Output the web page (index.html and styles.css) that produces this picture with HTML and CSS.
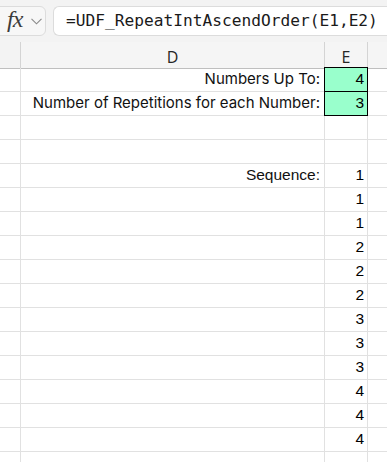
FILE: index.html
```html
<!DOCTYPE html>
<html lang="en">
<head>
    <meta charset="UTF-8">
    <title>UDF Repeat Int Ascend Order</title>
<link rel="stylesheet" href="styles.css">
</head>
<body>
<div class="formulaBar">
    <div class="fxBox">
        <span class="fx">fx</span>
        <svg class="chevron" width="11" height="7" viewBox="0 0 11 7"><path d="M0.5 0.8 L5.5 5.8 L10.5 0.8" fill="none" stroke="#8a8a8a" stroke-width="1.1"/></svg>
    </div>
    <div class="formulaBox">=UDF_RepeatIntAscendOrder(E1,E2)</div>
</div>
<div class="sheet">
    <div class="row header">
        <div class="cell"></div>
        <div class="cell colHead">D</div>
        <div class="cell colHead">E</div>
        <div class="cell last"></div>
    </div>
    <div class="row">
        <div class="cell"></div>
        <div class="cell label">Numbers Up To:</div>
        <div class="cell num input first">4</div>
        <div class="cell last"></div>
    </div>
    <div class="row">
        <div class="cell"></div>
        <div class="cell label">Number of Repetitions for each Number:</div>
        <div class="cell num input">3</div>
        <div class="cell last"></div>
    </div>
    <div class="row"><div class="cell"></div><div class="cell"></div><div class="cell"></div><div class="cell last"></div></div>
    <div class="row"><div class="cell"></div><div class="cell"></div><div class="cell"></div><div class="cell last"></div></div>
    <div class="row">
        <div class="cell"></div>
        <div class="cell seq">Sequence:</div>
        <div class="cell num">1</div>
        <div class="cell last"></div>
    </div>
    <div class="row"><div class="cell"></div><div class="cell"></div><div class="cell num">1</div><div class="cell last"></div></div>
    <div class="row"><div class="cell"></div><div class="cell"></div><div class="cell num">1</div><div class="cell last"></div></div>
    <div class="row"><div class="cell"></div><div class="cell"></div><div class="cell num">2</div><div class="cell last"></div></div>
    <div class="row"><div class="cell"></div><div class="cell"></div><div class="cell num">2</div><div class="cell last"></div></div>
    <div class="row"><div class="cell"></div><div class="cell"></div><div class="cell num">2</div><div class="cell last"></div></div>
    <div class="row"><div class="cell"></div><div class="cell"></div><div class="cell num">3</div><div class="cell last"></div></div>
    <div class="row"><div class="cell"></div><div class="cell"></div><div class="cell num">3</div><div class="cell last"></div></div>
    <div class="row"><div class="cell"></div><div class="cell"></div><div class="cell num">3</div><div class="cell last"></div></div>
    <div class="row"><div class="cell"></div><div class="cell"></div><div class="cell num">4</div><div class="cell last"></div></div>
    <div class="row"><div class="cell"></div><div class="cell"></div><div class="cell num">4</div><div class="cell last"></div></div>
    <div class="row"><div class="cell"></div><div class="cell"></div><div class="cell num">4</div><div class="cell last"></div></div>
    <div class="row"><div class="cell"></div><div class="cell"></div><div class="cell"></div><div class="cell last"></div></div>
</div>
</body>
</html>
```

FILE: styles.css
```css
body {
    margin: 0;
    background: #ffffff;
    font-family: "Liberation Sans", Arial, sans-serif;
    overflow: hidden;
}
.formulaBar {
    height: 42px;
    box-sizing: border-box;
    padding-top: 6px;
    background: #f3f3f3;
    display: flex;
    overflow: hidden;
}
.fxBox {
    flex: 0 0 56px;
    height: 30px;
    margin-left: -10px;
    box-sizing: border-box;
    border: 1px solid #dcdcdc;
    border-radius: 6px;
    background: #f7f7f7;
    display: flex;
    align-items: center;
    padding-left: 16px;
}
.fx {
    font-family: "Liberation Serif", serif;
    font-style: italic;
    font-size: 24px;
    color: #3c3c3c;
    letter-spacing: -1px;
    margin-top: -3px;
}
.chevron {
    margin-left: 9px;
}
.formulaBox {
    flex: 1;
    height: 30px;
    margin-left: 7px;
    box-sizing: border-box;
    border: 1px solid #dcdcdc;
    border-right: none;
    border-radius: 6px 0 0 6px;
    background: #ffffff;
    font-family: "DejaVu Sans Mono", monospace;
    font-size: 16.2px;
    line-height: 28px;
    padding-left: 12px;
    color: #1a1a1a;
    white-space: nowrap;
    overflow: hidden;
}
.sheet {
    background: #ffffff;
}
.row {
    display: grid;
    grid-template-columns: 21px 304px 43px 1fr;
    height: 24px;
}
.cell {
    box-sizing: border-box;
    border-right: 1px solid #e1e1e1;
    border-bottom: 1px solid #e1e1e1;
    font-size: 15.5px;
    color: #000000;
    white-space: nowrap;
    display: flex;
    align-items: flex-end;
    justify-content: flex-end;
    padding: 0 4px 3px 0;
}
.cell.last {
    border-right: none;
}
.header {
    height: 26px;
    background: #f3f3f3;
}
.header .cell {
    background: #f5f5f5;
    border-bottom: 1px solid #bfbfbf;
    border-right: 1px solid #d4d4d4;
    justify-content: center;
    align-items: center;
    padding: 4px 0 0 0;
    font-family: "Open Sans", sans-serif;
    font-size: 16px;
    color: #262626;
}
.header .cell:first-child {
    background: #f3f3f3;
    border-right: 1px solid #d4d4d4;
}
.header .cell.last {
    border-right: none;
}
.label {
    font-family: "Inter", sans-serif;
    font-size: 15px;
    color: #111111;
}
.seq {
    color: #111111;
}
.num {
    padding-right: 3px;
}
.input {
    background: #99ffcc;
    border-right: 1px solid #000000;
    border-bottom: 1px solid #000000;
    border-left: 1px solid #000000;
    margin-left: -1px;
}
.input.first {
    border-top: 1px solid #000000;
    margin-top: -1px;
}
```
